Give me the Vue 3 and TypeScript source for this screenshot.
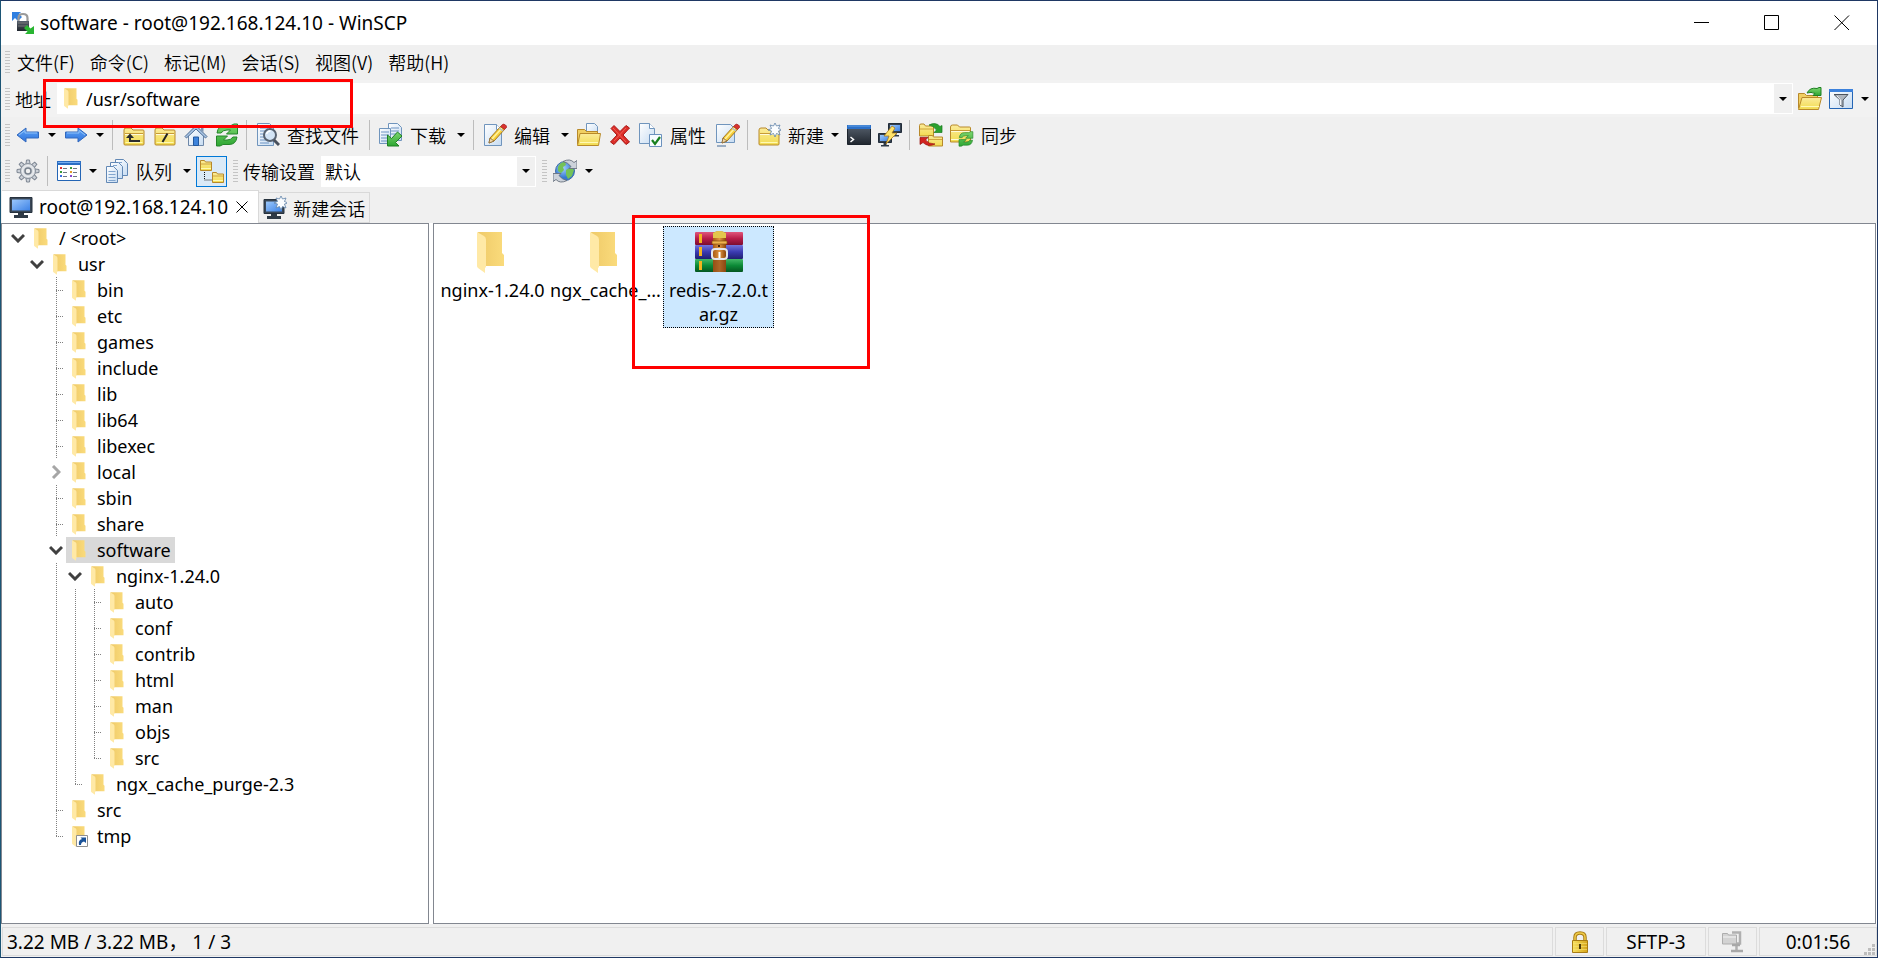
<script setup lang="ts">
import { ref } from 'vue'

interface TreeRow {
  name: string
  guides: string[]
  selected?: boolean
  link?: boolean
}
interface Tool {
  kind: 'button' | 'separator'
  icon?: string
  label?: string
  title?: string
  caret?: boolean
  tight?: boolean
}

const menus = ['文件(F)', '命令(C)', '标记(M)', '会话(S)', '视图(V)', '帮助(H)']
const path = ref('/usr/software')
const preset = ref('默认')

const sep: Tool = { kind: 'separator' }
const btn = (icon: string, title: string, extra: Partial<Tool> = {}): Tool => ({ kind: 'button', icon, title, ...extra })

const mainTools: Tool[] = [
  btn('back', '后退', { caret: true }),
  btn('forward', '前进', { caret: true }),
  sep,
  btn('up', '上级目录'),
  btn('rootdir', '根目录'),
  btn('home', '主目录'),
  btn('refresh', '刷新'),
  sep,
  btn('find', '查找文件', { label: '查找文件' }),
  sep,
  btn('download', '下载', { label: '下载', caret: true }),
  sep,
  btn('edit', '编辑', { label: '编辑', caret: true }),
  btn('open', '打开'),
  btn('remove', '删除'),
  btn('props', '属性', { label: '属性' }),
  btn('rename', '重命名'),
  sep,
  btn('newdir', '新建', { label: '新建', caret: true, tight: true }),
  btn('terminal', '终端'),
  btn('putty', 'PuTTY'),
  sep,
  btn('syncdirs', '同步浏览'),
  btn('sync', '同步', { label: '同步' }),
]
const viewTools: Tool[] = [
  btn('gear', '选项'),
  sep,
  btn('list', '视图', { caret: true }),
  btn('queue', '队列', { label: '队列', caret: true }),
]

const row = (guides: string, name: string, extra: Partial<TreeRow> = {}): TreeRow => ({
  name,
  guides: guides.split(' '),
  ...extra,
})
const tree: TreeRow[] = [
  row('open', '/ <root>'),
  row('none open', 'usr'),
  row('none none tee', 'bin'),
  row('none none tee', 'etc'),
  row('none none tee', 'games'),
  row('none none tee', 'include'),
  row('none none tee', 'lib'),
  row('none none tee', 'lib64'),
  row('none none tee', 'libexec'),
  row('none none closed', 'local'),
  row('none none tee', 'sbin'),
  row('none none tee', 'share'),
  row('none none open', 'software', { selected: true }),
  row('none none line open', 'nginx-1.24.0'),
  row('none none line line tee', 'auto'),
  row('none none line line tee', 'conf'),
  row('none none line line tee', 'contrib'),
  row('none none line line tee', 'html'),
  row('none none line line tee', 'man'),
  row('none none line line tee', 'objs'),
  row('none none line line end', 'src'),
  row('none none line end', 'ngx_cache_purge-2.3'),
  row('none none tee', 'src'),
  row('none none end', 'tmp', { link: true }),
]

const folderBody = '<path d="M2 7q0-2 2-2h5l2 2h10q1 0 1 1v13q0 1-1 1H3q-1 0-1-1z" fill="url(#gFolder)" stroke="#b8892a"/><path d="M3 10.500h18" stroke="#c79a36"/><path d="M3 11.500h18" stroke="#fffbd8"/><path d="M3.500 19.500h17" stroke="#fff9b4"/>'
const smallFolder = '<path d="M.5 1.500h4l1 1.500h6v8.500H.5z" fill="url(#gFolder)" stroke="#b8892a"/><path d="M1 5h10" stroke="#d0a440"/><path d="M1 9.500h10" stroke="#fff9b4"/>'
const page = '<path d="M1.500 1.500h12l5 5v16h-17z" fill="url(#gPage)" stroke="#7095bd"/><path d="M13.500 1.500v5h5" fill="#fff" stroke="#7095bd"/>'
const pencil = '<path d="M7 15 17.500 3.500l4 3L11 18l-5 2z" fill="#f6cf3a" stroke="#a47722"/><path d="m9 16 10-11" stroke="#fff3a0" stroke-width="1.500"/><path d="M7 15l4 3-5 2z" fill="#f1d6a5" stroke="#806033" stroke-width=".7"/><path d="m17.500 3.500 2-2q1-1 3 .5t1 2.500l-2 2z" fill="#d8322e" stroke="#9c2422" stroke-width=".7"/><path d="m16 5 4 3" stroke="#b5bdc8" stroke-width="1.500"/>'
const screen = '<path d="M.5.500h13v9H.5z" fill="#33404f" stroke="#222d3a"/><path d="M2 2h10v6H2z" fill="url(#gScreen)"/><path d="M5.500 10h3v2h2.500v1.500H3V12h2.500z" fill="#2e3a48"/>'
const arrows = '<path d="M2 10Q3 2.500 10 2.500h6l3-1.500h3.500v10H11.500l4-4H12q-4 0-6 3zM22 14q-1 7.500-8 7.500H8L5 23H1.500V13h11l-4 4H12q4 0 6-3z" fill="url(#gGreen)" stroke="#25852a"/>'
const star = '<path d="m6 0 1.500 3L11 2 9.500 5.500 13 7 9.500 8l1.500 4-3.500-1.500L6 14l-1.500-3.500L1 12l1.500-4L-1 7l3.500-1.500L1 2l3.500 1z" fill="#fbfdff" stroke="#5f83aa" stroke-width=".8"/>'
const cog = Array.from({ length: 8 }, (_, i) => `<path d="M10 5 10.500 1h3l.5 4z" transform="rotate(${i * 45} 12 12)" fill="#ccd1d8" stroke="#7e8793"/>`).join('')

const icons: Record<string, string> = {
  back: '<path d="m1 12 9-7v4h12.500v6H10v4z" fill="url(#gBlue)" stroke="#3268bd"/><path d="m3 12 6-4.500V10h12" fill="none" stroke="#8fc2fa"/>',
  forward: '<path d="m23 12-9-7v4H1.500v6H14v4z" fill="url(#gBlue)" stroke="#3268bd"/><path d="m21 12-6-4.500V10H3" fill="none" stroke="#8fc2fa"/>',
  up: folderBody + '<path d="M18 18H8v-4" fill="none" stroke="#2d2d2d" stroke-width="2"/><path d="m4 15 4-4.500 4 4.500z" fill="#2d2d2d"/>',
  rootdir: folderBody + '<path d="m9.500 19 5-8.500" stroke="#222" stroke-width="2"/>',
  home: '<path d="M4.500 12v10.500h15V12L12 4z" fill="url(#gPage)" stroke="#6e87a8"/><path d="M17 3h2.500v6L17 7z" fill="#7a94b4"/><path d="m1 13.500 11-11 11 11-1.500 1.500L12 6l-9.500 9z" fill="#a9c4e3" stroke="#4c6c94"/><path d="M9.500 14h5v8.500h-5z" fill="#3d83db" stroke="#22599f"/>',
  refresh: arrows,
  find: '<path d="M1.500.500h12l4 4v18h-16z" fill="url(#gPage)" stroke="#7095bd"/><path d="M4 5h8M4 8h6M4 11h5M4 14h5M4 17h6M4 20h9" stroke="#6c93c2"/><circle cx="14" cy="12" r="6" fill="#d3e4f5" stroke="#56616f" stroke-width="2"/><path d="M10.500 11q1-3 4-3" fill="none" stroke="#fff" stroke-width="1.500"/><path d="m18 17 5 5" stroke="#48505c" stroke-width="3"/>',
  download: '<path d="M9.500.500h9l4 4v13h-13z" fill="url(#gPage)" stroke="#7095bd"/><path d="M12 5h8M12 8h8M12 11h8" stroke="#6c93c2"/><path d="M.5 5.500h11v15H.5z" fill="url(#gPage)" stroke="#7095bd"/><path d="M2 9h8M2 12h8M2 15h6M2 18h6" stroke="#6c93c2"/><path d="m8.500 12 4 3.500 6-6.500 4.500 4-6.500 6.500 3.500 3.500H8.500z" fill="url(#gGreen)" stroke="#1e8023"/>',
  edit: page + pencil,
  open: '<path d="M9.500.500h8l3 3v9h-11z" fill="url(#gPage)" stroke="#7095bd"/><path d="M.5 21V6.500h7l2 2h11v13z" fill="#f0cf62" stroke="#b8892a"/><path d="M3 10.500h20.500l-2 12h-21z" fill="url(#gFolder)" stroke="#b8892a"/><path d="M3 19.500h18" stroke="#fff9b4"/>',
  remove: '<path d="M3 5.500 6 2.500l6 6 6-6 3.500 2.500-6.500 7 6.500 7-3.500 2.500-6-6.500-6 6.500L2.500 19l6.500-7z" fill="#dc2d28" stroke="#a91512"/><path d="m5 5 13 14M18 5 6 18" stroke="#ef5f55"/>',
  props: '<path d="M.5.500h10l5 5v15H.5z" fill="url(#gPage)" stroke="#7095bd"/><path d="M10.500.500v5h5" fill="#fff" stroke="#7095bd"/><path d="M10.500 11.500h12v12h-12z" fill="#f7fbff" stroke="#6b91bd"/><path d="m13 17 3 4 5-7" fill="none" stroke="#18801e" stroke-width="2.200"/>',
  rename: '<path d="M.5 1.500h14l4 4v14H.5z" fill="url(#gPage)" stroke="#7095bd"/><path d="M1 23h9" stroke="#7d97b6" stroke-width="1.500"/>' + pencil,
  newdir: folderBody + '<g transform="translate(12 0)">' + star + '</g>',
  terminal: '<path d="M.5 2.500h23v19H.5z" fill="url(#gDark)" stroke="#1c232c"/><path d="M0 2h24v4H0z" fill="#2b70c8"/><path d="M1 3h22" stroke="#65a0e5"/><path d="m3.500 14 3 2.500-3 2.500" fill="none" stroke="#fff" stroke-width="1.500"/>',
  putty: '<g transform="translate(10 0)">' + screen + '</g><g transform="translate(0 10)">' + screen + '</g><path d="m14 3-8 10h5l-3 8 11-11h-5l3-5z" fill="#ffe36b" stroke="#a77a1e" stroke-width=".8"/>',
  syncdirs: '<path d="M.5 2.500q0-1.500 1.500-1.500h3l1.500 2h8v10H.5z" fill="url(#gFolder)" stroke="#b8892a"/><path d="M1 6h13" stroke="#d0a440"/><g transform="translate(9 11)"><path d="M.5 1.500h4l1 1.500h9v9H.5z" fill="url(#gFolder)" stroke="#b8892a"/><path d="M1 5.500h13" stroke="#d0a440"/></g><path d="M10 2q7-3.500 11 1.500l2-1v7h-8l2.500-2.500Q14 2.500 10 2z" fill="#2aa12e" stroke="#197a1d" stroke-width=".7"/><path d="m1 14.500 8 0-2.500 2.500q3 4 9.500 4-7 3.500-12-1.500l-3 2z" fill="#d2231f" stroke="#98110f" stroke-width=".7"/>',
  sync: '<path d="M.5 4q0-2 2-2h5l2 2h10q1 0 1 1v14H.5z" fill="url(#gFolder)" stroke="#b8892a"/><path d="M1 7.500h19" stroke="#c79a36"/><path d="M1 8.500h19M1 16.500h10" stroke="#fffbd8"/><g transform="translate(8 8) scale(.66)">' + arrows + '</g>',
  gear: cog + '<circle cx="12" cy="12" r="7.500" fill="#d7dbe0" stroke="#8a929d"/><circle cx="12" cy="12" r="5.500" fill="none" stroke="#eff1f3"/><circle cx="12" cy="12" r="3" fill="#f0f0f0" stroke="#77808c" stroke-width="1.500"/>',
  list: '<path d="M.5 2.500h23v19H.5z" fill="#fff" stroke="#2465b5"/><path d="M0 2h24v4H0z" fill="#2c6fc4"/><path d="M1 3.500h22" stroke="#78aef0"/><path d="M3 8h2v2H3z" fill="#e03030"/><path d="M3 12h2v2H3z" fill="#3a9a3a"/><path d="M3 16h2v2H3z" fill="#3a6be0"/><path d="M13 8h2v2h-2z" fill="#3a9a3a"/><path d="M13 12h2v2h-2z" fill="#e09b2c"/><path d="M13 16h2v2h-2z" fill="#8a45cc"/><path d="M6 9.500h4M6 13.500h4M6 17.500h4M16 9.500h4M16 13.500h4M16 17.500h4" stroke="#6d7884"/>',
  queue: '<path d="M10.500.500h8l4 4v12h-12z" fill="url(#gPage)" stroke="#6288b5"/><path d="M5.500 3.500h8l4 4v12h-12z" fill="url(#gPage)" stroke="#6288b5"/><path d="M1.500 7.500h7l4 4v12h-11z" fill="url(#gPage)" stroke="#6288b5"/><path d="M13 3.500h4M8 6.500h4M3.500 12.500h7M3.500 15.500h7M3.500 18.500h7M3.500 21.500h7" stroke="#82a6cf"/>',
  treeview: '<g>' + smallFolder + '</g><path d="M4.500 13v8h7" fill="none" stroke="#111" stroke-width="1" stroke-dasharray="1 1"/><g transform="translate(12 12)">' + smallFolder + '</g>',
  globe: '<circle cx="12" cy="12" r="9.500" fill="url(#gGlobe)" stroke="#3f6da6"/><path d="M5 8q2-5 7-5l1 3-3 2 1 3-3 3-3-2zM13 11l5-3 3 3-2 6-4 3-2-4zM17 4l3 3-3 0z" fill="#74c257"/><path d="M10 2.500q7-3.500 11 1l3-2v8h-8l2-2q-3-4-8-5zM14 21.500q-7 3.500-11-1l-3 2v-8h8l-2 2q3 4 8 5z" fill="#ccd2da" stroke="#68717e" stroke-width=".9"/>',
  monitor: '<path d="M1 2.500h22v15H1z" fill="#3a4756" stroke="#27323e"/><path d="M3 4.500h18v11H3z" fill="url(#gScreen)"/><path d="M9 18h6v2h4v3H5v-3h4z" fill="#2f3a46"/>',
  newsession: '<path d="M1 3.500h20v14H1z" fill="#3a4756" stroke="#27323e"/><path d="M3 5.500h16v10H3z" fill="url(#gScreen)"/><path d="M8 18h6v2h4v3H4v-3h4z" fill="#2f3a46"/><g transform="translate(12 0)">' + star + '</g>',
  opendir: '<path d="M.5 21V6.500h6l2 2h11v13z" fill="#f0cf62" stroke="#b8892a"/><path d="M4 10.500h19.500l-3 12H.5z" fill="url(#gFolder)" stroke="#b8892a"/><path d="M3 19.500h18" stroke="#fff9b4"/><path d="M9 6q3-6 10-4.500L21 .5h2v8h-8l2-2q-4-2-8-.5z" fill="url(#gGreen)" stroke="#1e8023"/>',
  filter: '<path d="M.5 2.500h23v19H.5z" fill="url(#gPage)" stroke="#2465b5"/><path d="M0 2h24v3H0z" fill="#3d82dc"/><path d="M5 7.500h14L14 13v7l-3-2v-5z" fill="#aeb5be" stroke="#4a525d"/><path d="m8 9 3.500 4v5" fill="none" stroke="#f3f5f7"/>',
  app: '<path d="M1 1h9L8 3l3 3-4 4-3-3-3 3z" fill="#2f7fe0"/><path d="M7.500 11V7q0-4 4.500-4t4.500 4v4" fill="none" stroke="#9a9a9a" stroke-width="2.200"/><path d="M6 10h12v10H6z" fill="url(#gDark)"/><path d="M7 12h10M7 15h10" stroke="#777"/><path d="M23 23h-9l2.500-2.500L13 17l3-3 3.500 3.500L23 15z" fill="#29b532"/>',
  lock: '<path d="M7 11V7.500Q7 3 12 3t5 4.500V11" fill="none" stroke="#a87c14" stroke-width="3.500"/><path d="M7 11V7.500Q7 3 12 3t5 4.500V11" fill="none" stroke="#f0cb49" stroke-width="1.500"/><path d="M4.500 10.500h15v12h-15z" fill="url(#gLock)" stroke="#a87c14"/><path d="M5 13.500h14M5 16.500h14M5 19.500h14" stroke="#f7e27a" stroke-opacity=".6"/><path d="M11 14h2v5h-2z" fill="#4c3a0c"/>',
  compress: '<path d="M1.500 3.500h5l1 1.500h8v9h-14z" fill="#d3d3d3" stroke="#adadad"/><path d="M2 7h13" stroke="#f3f3f3"/><path d="M11 2.500h8v11h-4M15.500 14v7" fill="none" stroke="#b0b0b0" stroke-width="2.500"/><path d="M11 15h8M10 21h12" stroke="#a8a8a8" stroke-width="2.500"/>',
}
</script>

<template>
  <div class="window">
    <svg class="defs" width="0" height="0" aria-hidden="true">
      <defs>
        <linearGradient id="gFolder" x2="0" y2="1"><stop stop-color="#fbeb9a" /><stop offset="1" stop-color="#f2dc50" /></linearGradient>
        <linearGradient id="gPage" x2="1" y2="1"><stop stop-color="#fff" /><stop offset="1" stop-color="#c7dcf2" /></linearGradient>
        <linearGradient id="gBlue" x2="0" y2="1"><stop stop-color="#5ea4f5" /><stop offset="1" stop-color="#2f73de" /></linearGradient>
        <linearGradient id="gGreen" x2="0" y2="1"><stop stop-color="#7dd66e" /><stop offset="1" stop-color="#2da632" /></linearGradient>
        <linearGradient id="gScreen" x2="1" y2="1"><stop stop-color="#9cc8fb" /><stop offset="1" stop-color="#3d82e6" /></linearGradient>
        <linearGradient id="gDark" x2="0" y2="1"><stop stop-color="#56606d" /><stop offset="1" stop-color="#20262e" /></linearGradient>
        <linearGradient id="gLock"><stop stop-color="#f8e262" /><stop offset="1" stop-color="#d6a419" /></linearGradient>
        <radialGradient id="gGlobe" cx=".4" cy=".35"><stop stop-color="#a6d2ff" /><stop offset="1" stop-color="#3578d2" /></radialGradient>
        <linearGradient id="gBack" x2="1"><stop stop-color="#efca68" /><stop offset="1" stop-color="#fadb7c" /></linearGradient>
        <linearGradient id="gRed" x2="0" y2="1"><stop stop-color="#e0567c" /><stop offset=".5" stop-color="#b81d49" /><stop offset="1" stop-color="#7c0d30" /></linearGradient>
        <linearGradient id="gIndigo" x2="0" y2="1"><stop stop-color="#7474dc" /><stop offset=".5" stop-color="#3a3ab0" /><stop offset="1" stop-color="#202070" /></linearGradient>
        <linearGradient id="gBook" x2="0" y2="1"><stop stop-color="#43b866" /><stop offset=".5" stop-color="#0c8a37" /><stop offset="1" stop-color="#045620" /></linearGradient>
        <linearGradient id="gBelt" x2="1"><stop stop-color="#a85a14" /><stop offset=".5" stop-color="#e09540" /><stop offset="1" stop-color="#8c4408" /></linearGradient>
        <symbol id="folder" viewBox="0 0 28 41">
          <path d="M1 0h24v21l2 2v11H8z" fill="url(#gBack)" />
          <path d="M0 0l7 4q2 1 2 4v27l-1 1v5L1 36q-1-1-1-2z" fill="#ffe9a6" />
        </symbol>
      </defs>
    </svg>

    <header class="titlebar">
      <svg class="icon" viewBox="0 0 24 24" v-html="icons.app"></svg>
      <h1 class="title">software - root@192.168.124.10 - WinSCP</h1>
      <button class="winbtn" aria-label="最小化"><svg width="16" height="16" viewBox="0 0 16 16"><path d="M0 7.500h15" /></svg></button>
      <button class="winbtn" aria-label="最大化"><svg width="16" height="16" viewBox="0 0 16 16"><path d="M.5.500h14v14H.5z" /></svg></button>
      <button class="winbtn" aria-label="关闭"><svg width="16" height="16" viewBox="0 0 16 16"><path d="m.5.500 14.500 14.500M15 .5.500 15" /></svg></button>
    </header>

    <nav class="bar menubar">
      <span class="grip"></span>
      <button v-for="m in menus" :key="m" class="menu">{{ m }}</button>
    </nav>

    <div class="bar address">
      <span class="grip"></span>
      <label class="bar-label" for="path">地址</label>
      <div class="combo path-combo">
        <select id="path" v-model="path"><option>/usr/software</option></select>
        <svg class="path-icon" width="14" height="21"><use href="#folder" /></svg>
        <span class="drop"><i class="caret"></i></span>
      </div>
      <button class="tool" aria-label="打开目录"><svg class="icon" viewBox="0 0 24 24" v-html="icons.opendir"></svg></button>
      <button class="tool" aria-label="过滤"><svg class="icon" viewBox="0 0 24 24" v-html="icons.filter"></svg></button>
      <button class="caret-btn" aria-label="过滤选项"><i class="caret"></i></button>
    </div>

    <div class="bar main-tools">
      <span class="grip"></span>
      <template v-for="(t, i) in mainTools" :key="i">
        <span v-if="t.kind === 'separator'" class="separator"></span>
        <template v-else>
          <button class="tool" :class="{ tight: t.tight }" :aria-label="t.title">
            <svg class="icon" viewBox="0 0 24 24" v-html="icons[t.icon ?? '']"></svg>
            <span v-if="t.label" class="tool-text">{{ t.label }}</span>
          </button>
          <button v-if="t.caret" class="caret-btn" :aria-label="t.title + '菜单'"><i class="caret"></i></button>
        </template>
      </template>
    </div>

    <div class="bar view-tools">
      <span class="grip"></span>
      <template v-for="(t, i) in viewTools" :key="i">
        <span v-if="t.kind === 'separator'" class="separator"></span>
        <template v-else>
          <button class="tool" :aria-label="t.title">
            <svg class="icon" viewBox="0 0 24 24" v-html="icons[t.icon ?? '']"></svg>
            <span v-if="t.label" class="tool-text">{{ t.label }}</span>
          </button>
          <button v-if="t.caret" class="caret-btn" :aria-label="t.title + '菜单'"><i class="caret"></i></button>
        </template>
      </template>
      <button class="tool pressed" aria-pressed="true" aria-label="目录树"><svg class="icon" viewBox="0 0 24 24" v-html="icons.treeview"></svg></button>
      <span class="grip inner"></span>
      <label class="bar-label" for="preset">传输设置</label>
      <div class="combo preset-combo">
        <select id="preset" v-model="preset"><option>默认</option></select>
        <span class="drop"><i class="caret"></i></span>
      </div>
      <span class="grip inner"></span>
      <button class="tool" aria-label="浏览"><svg class="icon" viewBox="0 0 24 24" v-html="icons.globe"></svg></button>
      <button class="caret-btn" aria-label="浏览菜单"><i class="caret"></i></button>
    </div>

    <div class="tabs">
      <div class="tab active">
        <svg class="icon" viewBox="0 0 24 24" v-html="icons.monitor"></svg>
        <button class="tab-text large">root@192.168.124.10</button>
        <button class="tab-close" aria-label="关闭会话"><svg width="12" height="12" viewBox="0 0 12 12"><path d="m.5.500 11 11M11.500.500l-11 11" /></svg></button>
      </div>
      <button class="tab">
        <svg class="icon" viewBox="0 0 24 24" v-html="icons.newsession"></svg>
        <span class="tab-text">新建会话</span>
      </button>
    </div>

    <main class="panes">
      <ul class="tree">
        <li v-for="(r, i) in tree" :key="i" class="tree-row">
          <span v-for="(g, j) in r.guides" :key="j" class="guide" :class="g">
            <svg v-if="g === 'open'" width="14" height="10" viewBox="0 0 14 10"><path d="m1 2 6 6 6-6" stroke="#404040" /></svg>
            <svg v-else-if="g === 'closed'" width="10" height="14" viewBox="0 0 10 14"><path d="m2 1 6 6-6 6" stroke="#a6a6a6" /></svg>
          </span>
          <span class="node" :class="{ selected: r.selected }">
            <span class="node-icon">
              <svg width="14" height="21"><use href="#folder" /></svg>
              <svg v-if="r.link" class="shortcut" width="12" height="12" viewBox="0 0 12 12">
                <path d="M.5.500h11v11H.5z" fill="#fff" stroke="#8f8f8f" />
                <path d="M3 10q-1-5 3-6L4.500 2.500H10V8L8 6.500Q5 7 5 10z" fill="#1b5399" />
              </svg>
            </span>
            <span>{{ r.name }}</span>
          </span>
        </li>
      </ul>

      <ul class="files">
        <li class="file">
          <span class="file-icon"><svg class="dir" width="28" height="41"><use href="#folder" /></svg></span>
          <span class="file-name">nginx-1.24.0</span>
        </li>
        <li class="file">
          <span class="file-icon"><svg class="dir" width="28" height="41"><use href="#folder" /></svg></span>
          <span class="file-name">ngx_cache_...</span>
        </li>
        <li class="file chosen">
          <span class="file-icon">
            <svg width="48" height="42" viewBox="0 0 48 42">
              <rect y="1" width="48" height="13" rx="1" fill="url(#gRed)" />
              <rect y="14" width="48" height="14" rx="1" fill="url(#gIndigo)" />
              <rect y="28" width="48" height="13" rx="1" fill="url(#gBook)" />
              <path d="M4 3h3v9H4zM4 16h3v9H4zM4 30h3v9H4z" fill="#f4b41e" />
              <path d="M18 2q6-4 13 0v39H18z" fill="url(#gBelt)" />
              <path d="M18 2q6-4 13 0v5H18z" fill="#e3c64c" />
              <path d="M17 10h15v3H17z" fill="#f0b34e" stroke="#87500f" stroke-width=".7" />
              <path d="M18 29h13v12H18z" fill="#8b4817" fill-opacity=".6" />
              <path d="M24 14v2" stroke="#4a2506" stroke-width="2" />
              <rect x="17" y="18" width="15" height="10" rx="3" fill="none" stroke="#e4e7ea" stroke-width="2" />
              <path d="M24.500 21v6" stroke="#fff" stroke-width="2" />
            </svg>
          </span>
          <span class="file-name">redis-7.2.0.t<br />ar.gz</span>
        </li>
      </ul>
    </main>

    <footer class="status large">
      <span class="cell grow">3.22 MB / 3.22 MB， 1 / 3</span>
      <span class="cell small"><svg class="icon" viewBox="0 0 24 24" v-html="icons.lock"></svg></span>
      <span class="cell protocol">SFTP-3</span>
      <span class="cell small"><svg class="icon" viewBox="0 0 24 24" v-html="icons.compress"></svg></span>
      <span class="cell time">0:01:56</span>
      <svg class="sizer" width="12" height="12" viewBox="0 0 12 12"><path d="M8 0h3v3H8zM4 4h3v3H4zM8 4h3v3H8zM0 8h3v3H0zM4 8h3v3H4zM8 8h3v3H8z" fill="#bdbdbd" /></svg>
    </footer>

    <div class="mark mark-path"></div>
    <div class="mark mark-file"></div>
  </div>
</template>

<style>
body {
  margin: 0;
}
</style>

<style scoped>
.window {
  position: relative;
  box-sizing: border-box;
  display: flex;
  flex-direction: column;
  height: 100vh;
  overflow: hidden;
  border: 1px solid #1f3864;
  border-left-color: #1c5575;
  background: #f0f0f0;
  color: #000;
  font: 350 18px/26px "Noto Sans CJK SC", sans-serif;
  cursor: default;
}
.tree,
.files,
.path-combo select {
  font: 400 18px/26px "Noto Sans", "Noto Sans CJK SC", sans-serif;
}
.large,
.title {
  font: 400 19px/26px "Noto Sans", "Noto Sans CJK SC", sans-serif;
}
.defs {
  position: absolute;
}
button {
  display: flex;
  align-items: center;
  flex: none;
  margin: 0;
  padding: 0;
  border: 0;
  background: none;
  color: inherit;
  font: inherit;
}
ul {
  margin: 0;
  padding: 0;
  list-style: none;
}
.icon {
  flex: none;
  width: 24px;
  height: 24px;
}
.titlebar {
  display: flex;
  align-items: center;
  flex: none;
  height: 44px;
  padding-left: 10px;
  background: #fff;
}
.title {
  flex: 1;
  margin: 0 0 0 5px;
}
.winbtn {
  justify-content: center;
  width: 70px;
  height: 44px;
}
.winbtn svg,
.tab-close svg {
  fill: none;
  stroke: #000;
}
.bar {
  display: flex;
  align-items: center;
  flex: none;
  height: 36px;
  padding-left: 4px;
  white-space: nowrap;
}
.menubar {
  height: 33px;
  padding-bottom: 2px;
}
.address {
  height: 37px;
  background: #f2f2f2;
}
.grip {
  flex: none;
  width: 5px;
  height: 22px;
  margin-right: 2px;
  background: repeating-linear-gradient(#c4c4c4 0 1px, transparent 1px 3px);
}
.grip.inner {
  margin-left: 6px;
}
.menu {
  padding: 0 9px 0 5px;
}
.menu + .menu {
  padding-left: 6px;
}
.bar-label {
  margin: 0 6px 0 3px;
}
.tool {
  height: 31px;
  padding: 0 3px 0 4px;
}
.tool-text {
  margin: 0 3px 0 4px;
}
.tool:has(.tool-text) .icon {
  margin-right: 3px;
}
.tool.tight {
  padding-right: 0;
}
.tight .tool-text {
  margin-right: 2px;
}
.pressed {
  box-sizing: border-box;
  width: 31px;
  justify-content: center;
  margin-left: 1px;
  padding: 0;
  border: 1px solid #0078d7;
  background: #dbeaf7;
}
.caret-btn {
  justify-content: center;
  width: 17px;
  height: 31px;
}
.caret {
  border: 4px solid transparent;
  border-top-color: #000;
  border-bottom: 0;
}
.separator {
  flex: none;
  width: 1px;
  height: 30px;
  margin: 0 5px 0 4px;
  background: #bdbdbd;
}
.combo {
  display: grid;
  grid-template-columns: 1fr 18px;
  align-items: center;
  box-sizing: border-box;
  height: 31px;
  padding-right: 1px;
  background: #fff;
}
.combo > * {
  grid-row: 1;
}
.combo select {
  grid-column: 1 / 3;
  width: 100%;
  height: 31px;
  padding: 0 0 0 4px;
  border: 0;
  outline: 0;
  background: transparent;
  color: #000;
  font: inherit;
  appearance: none;
}
.path-combo {
  flex: 1;
  margin-right: 1px;
}
.combo.path-combo select {
  padding-left: 29px;
  font-family: "Noto Sans", sans-serif;
  font-weight: 400;
}
.path-icon {
  grid-column: 1;
  margin-left: 7px;
  pointer-events: none;
}
.drop {
  display: flex;
  align-items: center;
  justify-content: center;
  grid-column: 2;
  height: 29px;
  background: #f0f0f0;
  pointer-events: none;
}
.address .caret-btn {
  margin-right: 4px;
}
.preset-combo {
  width: 215px;
}
.tabs {
  display: flex;
  align-items: flex-end;
  flex: none;
  height: 34px;
  padding-left: 1px;
}
.tab {
  display: flex;
  align-items: center;
  box-sizing: border-box;
  height: 31px;
  padding: 0 4px;
  border: 1px solid #d9d9d9;
  border-left: 0;
  background: #f0f0f0;
}
.tab.active {
  height: 33px;
  padding: 0 10px 0 7px;
  border-bottom: 0;
  background: #fff;
}
.tab-text {
  margin-left: 6px;
}
.tab-close {
  margin-left: 8px;
}
.panes {
  display: flex;
  flex: 1;
  gap: 4px;
  min-height: 0;
  padding-right: 1px;
  background: #fff;
}
.tree,
.files {
  box-sizing: border-box;
  border: 1px solid #828790;
  background: #fff;
}
.tree {
  flex: none;
  width: 428px;
  padding: 1px 0 0 7px;
}
.tree-row {
  display: flex;
  height: 26px;
}
.guide {
  display: flex;
  align-items: center;
  box-sizing: border-box;
  flex: none;
  width: 19px;
  padding-left: 2px;
  background-repeat: no-repeat;
}
.guide svg {
  fill: none;
  stroke-width: 3;
}
.guide.closed {
  padding-left: 4px;
}
.line,
.tee,
.end {
  background-image: repeating-linear-gradient(#808080 0 1px, transparent 1px 2px), repeating-linear-gradient(90deg, #808080 0 1px, transparent 1px 2px);
  background-position: 9px 0, 9px 13px;
  background-size: 1px 26px, 7px 1px;
}
.line {
  background-size: 1px 26px, 0 0;
}
.end {
  background-size: 1px 14px, 7px 1px;
}
.node {
  display: flex;
  align-items: center;
  padding: 0 4px 0 6px;
  white-space: nowrap;
}
.node.selected {
  background: #d9d9d9;
}
.node-icon {
  position: relative;
  display: flex;
  margin-right: 11px;
}
.shortcut {
  position: absolute;
  right: -2px;
  bottom: 0;
}
.files {
  display: flex;
  align-items: flex-start;
  flex: 1;
  padding: 2px;
}
.file {
  box-sizing: border-box;
  width: 113px;
  padding: 1px 0;
  border: 1px solid transparent;
  text-align: center;
  line-height: 24px;
  white-space: nowrap;
}
.file.chosen {
  width: 111px;
  margin-left: 1px;
  border: 1px dotted #000;
  background: #cce8ff;
}
.file-icon {
  display: flex;
  align-items: center;
  justify-content: center;
  height: 48px;
  margin-bottom: 2px;
}
.dir {
  margin-right: 4px;
}
.file-name {
  display: block;
}
.status {
  position: relative;
  display: flex;
  gap: 2px;
  flex: none;
  height: 29px;
  padding: 3px 0 1px 1px;
}
.cell {
  display: flex;
  align-items: center;
  justify-content: center;
  box-sizing: border-box;
  border: 1px solid #dcdcdc;
}
.grow {
  flex: 1;
  justify-content: flex-start;
  padding-left: 4px;
}
.small {
  width: 49px;
}
.protocol {
  width: 100px;
}
.time {
  width: 118px;
}
.sizer {
  position: absolute;
  right: 1px;
  bottom: 1px;
}
.mark {
  position: absolute;
  box-sizing: border-box;
  border: 3px solid #f00;
  pointer-events: none;
}
.mark-path {
  left: 42px;
  top: 78px;
  width: 310px;
  height: 49px;
}
.mark-file {
  left: 631px;
  top: 214px;
  width: 238px;
  height: 154px;
}
</style>
